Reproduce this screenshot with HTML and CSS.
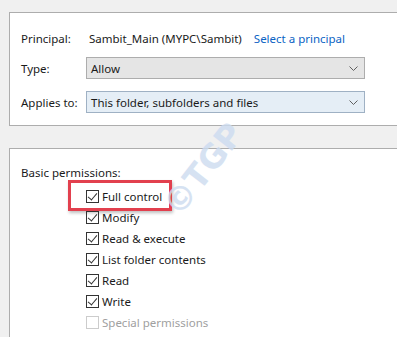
FILE: index.html
```html
<!DOCTYPE html>
<html lang="en">
<head>
    <meta charset="UTF-8">
    <title>Permission Entry</title>
    <link rel="stylesheet" href="styles.css">
</head>
<body>
    <div class="panel top">
        <div class="row principal">
            <span class="label">Principal:</span>
            <span class="value">Sambit_Main (MYPC\Sambit)</span>
            <a class="link" href="#">Select a principal</a>
        </div>
        <div class="row">
            <span class="label">Type:</span>
            <div class="select">
                <span>Allow</span>
                <svg class="chev" width="9" height="5" viewBox="0 0 9 5"><path d="M0.5 0.5 L4.5 4.5 L8.5 0.5" fill="none" stroke="#606060" stroke-width="1"/></svg>
            </div>
        </div>
        <div class="row">
            <span class="label">Applies to:</span>
            <div class="select focus">
                <span>This folder, subfolders and files</span>
                <svg class="chev" width="9" height="5" viewBox="0 0 9 5"><path d="M0.5 0.5 L4.5 4.5 L8.5 0.5" fill="none" stroke="#606060" stroke-width="1"/></svg>
            </div>
        </div>
    </div>

    <div class="panel bottom">
        <div class="heading">Basic permissions:</div>
        <ul class="perms">
            <li class="highlight"><span class="box checked"></span>Full control</li>
            <li><span class="box checked"></span>Modify</li>
            <li><span class="box checked"></span>Read &amp; execute</li>
            <li><span class="box checked"></span>List folder contents</li>
            <li><span class="box checked"></span>Read</li>
            <li><span class="box checked"></span>Write</li>
            <li class="disabled"><span class="box"></span>Special permissions</li>
        </ul>
    </div>

    <div class="watermark">&copy;TGP</div>
</body>
</html>
```

FILE: styles.css
```css
body {
    margin: 0;
    background-color: #f0f0f0;
    font-family: "Noto Sans", "Open Sans", sans-serif;
    font-size: 11.5px;
    color: #1a1a1a;
    overflow: hidden;
    height: 337px;
    position: relative;
}

.panel {
    background-color: #fff;
    border: 1px solid #adadad;
    border-right: none;
    margin-left: 9px;
    box-sizing: border-box;
}

.panel.top {
    margin-top: 12px;
    height: 114px;
    padding: 16px 0 0 11px;
}

.panel.bottom {
    margin-top: 22px;
    height: 200px;
    padding: 16px 0 0 11px;
}

.row {
    display: flex;
    align-items: center;
    height: 22px;
    margin-bottom: 12px;
}

.row.principal {
    height: 18px;
    margin-bottom: 10px;
}

.label {
    width: 65px;
    flex: none;
}

.value {
    margin-left: 3px;
}

.link {
    margin-left: 12px;
    color: #0b63c4;
    text-decoration: none;
}

.select {
    width: 279px;
    height: 22px;
    box-sizing: border-box;
    border: 1px solid #adadad;
    background-color: #e5e5e5;
    display: flex;
    align-items: center;
    justify-content: space-between;
    padding: 0 6px 0 4px;
}

.select.focus {
    background-color: #e5eef6;
    border-color: #9fb1c4;
}

.heading {
    margin-bottom: 6px;
}

.perms {
    list-style: none;
    margin: 0;
    padding: 0 0 0 65px;
}

.perms li {
    display: flex;
    align-items: center;
    height: 21px;
    position: relative;
}

.box {
    width: 13px;
    height: 13px;
    box-sizing: border-box;
    border: 1px solid #333;
    margin-right: 3px;
    position: relative;
    flex: none;
}

.box.checked::after {
    content: "";
    position: absolute;
    left: 3px;
    top: 0px;
    width: 4px;
    height: 8px;
    border: solid #333;
    border-width: 0 1px 1px 0;
    transform: rotate(40deg);
}

.disabled {
    color: #a0a0a0;
}

.disabled .box {
    border-color: #cccccc;
}

.highlight::before {
    content: "";
    position: absolute;
    left: -18px;
    top: -6px;
    width: 104px;
    height: 31px;
    box-sizing: border-box;
    border: 3px solid #e2404e;
    box-shadow: 1px 2px 3px rgba(0, 0, 0, 0.25);
}

.watermark {
    position: absolute;
    left: 184px;
    top: 188px;
    font-family: "DejaVu Sans", sans-serif;
    font-weight: bold;
    font-size: 33px;
    line-height: 34px;
    color: #cddcf0;
    opacity: 0.8;
    transform: rotate(-52deg);
    transform-origin: left bottom;
    pointer-events: none;
}
```
